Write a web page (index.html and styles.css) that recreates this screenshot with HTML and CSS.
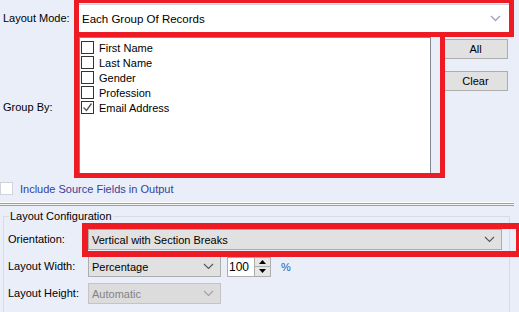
FILE: index.html
```html
<!DOCTYPE html>
<html lang="en">
<head>
  <meta charset="UTF-8">
  <title>Group Layout Options</title>
  <link rel="stylesheet" href="styles.css">
</head>
<body>
  <div class="page">

    <!-- Layout mode -->
    <div class="mode-row">
      <span class="label mode-label">Layout Mode:</span>
      <div class="combo combo-white">
        <span>Each Group Of Records</span>
        <svg class="chev" width="11" height="7" viewBox="0 0 11 7"><path d="M1 1l4.5 4.5L10 1" fill="none" stroke="#9aa3c2" stroke-width="1.3"/></svg>
      </div>
    </div>

    <!-- Group by list -->
    <div class="group-row">
      <span class="label group-label">Group By:</span>
      <div class="list">
        <div class="item"><span class="box"></span>First Name</div>
        <div class="item"><span class="box"></span>Last Name</div>
        <div class="item"><span class="box"></span>Gender</div>
        <div class="item"><span class="box"></span>Profession</div>
        <div class="item">
          <span class="box"><svg width="11" height="11" viewBox="0 0 11 11"><path d="M1.5 5.5l3 3 5-7" fill="none" stroke="#555" stroke-width="1.3"/></svg></span>Email Address
        </div>
      </div>
      <div class="buttons">
        <button class="btn">All</button>
        <button class="btn">Clear</button>
      </div>
    </div>

    <div class="include-row">
      <span class="box box-plain"></span>
      <span class="include-text">Include Source Fields in Output</span>
    </div>

    <div class="separator"></div>

    <!-- Layout configuration group -->
    <div class="groupbox">
      <div class="group-title">Layout Configuration</div>
      <div class="cfg-row">
        <span class="label cfg-label">Orientation:</span>
        <div class="combo combo-gray wide">
          <span>Vertical with Section Breaks</span>
          <svg class="chev" width="11" height="7" viewBox="0 0 11 7"><path d="M1 1l4.5 4.5L10 1" fill="none" stroke="#555" stroke-width="1.1"/></svg>
        </div>
      </div>
      <div class="cfg-row">
        <span class="label cfg-label">Layout Width:</span>
        <div class="combo combo-gray narrow">
          <span>Percentage</span>
          <svg class="chev" width="11" height="7" viewBox="0 0 11 7"><path d="M1 1l4.5 4.5L10 1" fill="none" stroke="#555" stroke-width="1.1"/></svg>
        </div>
        <div class="numeric">
          <span class="num-value">100</span>
          <div class="spin">
            <span class="spin-btn"><svg width="7" height="4" viewBox="0 0 7 4"><path d="M0 4L3.5 0L7 4z" fill="#000"/></svg></span>
            <span class="spin-btn"><svg width="7" height="4" viewBox="0 0 7 4"><path d="M0 0L3.5 4L7 0z" fill="#000"/></svg></span>
          </div>
        </div>
        <span class="percent">%</span>
      </div>
      <div class="cfg-row">
        <span class="label cfg-label">Layout Height:</span>
        <div class="combo combo-gray narrow disabled">
          <span>Automatic</span>
          <svg class="chev" width="11" height="7" viewBox="0 0 11 7"><path d="M1 1l4.5 4.5L10 1" fill="none" stroke="#a0a0a0" stroke-width="1.1"/></svg>
        </div>
      </div>
    </div>

    <!-- Highlight marks drawn over the form -->
    <div class="mark mark-mode"></div>
    <div class="mark mark-list"></div>
    <div class="mark mark-orient"></div>
  </div>
</body>
</html>
```

FILE: styles.css
```css
body {
  margin: 0;
  background: #eaeef8;
  font-family: "Liberation Sans", Arial, sans-serif;
  font-size: 11px;
  color: #000;
}
.page {
  position: relative;
  width: 519px;
  height: 312px;
  overflow: hidden;
}
.label {
  line-height: 13px;
}

/* combos */
.combo {
  display: flex;
  align-items: center;
  justify-content: space-between;
  box-sizing: border-box;
  padding: 0 6px 0 3px;
}
.combo-white {
  width: 432px;
  height: 30px;
  background: #fff;
  border: 1px solid #c9cfe2;
  padding-right: 8px;
  font-size: 11.5px;
}
.combo-gray {
  height: 21px;
  background: #e1e1e1;
  border: 1px solid #adadad;
}
.combo-gray.wide {
  width: 414px;
}
.combo-gray.narrow {
  width: 133px;
}
.combo.disabled {
  background: #dcdcdc;
  border-color: #c4c4c4;
  color: #838383;
}

/* top rows */
.mode-row {
  display: flex;
  align-items: center;
  height: 37px;
  padding-left: 3px;
  box-sizing: border-box;
}
.mode-label {
  width: 75px;
}
.group-row {
  display: flex;
  height: 138px;
  padding-left: 3px;
}
.group-label {
  width: 76px;
  padding-top: 64px;
}
.list {
  width: 352px;
  box-sizing: border-box;
  background: #fff;
  border: 1px solid #828790;
  padding-top: 2px;
}
.item {
  display: flex;
  align-items: center;
  height: 15px;
  padding-left: 1px;
}
.box {
  display: inline-flex;
  align-items: center;
  justify-content: center;
  width: 13px;
  height: 13px;
  box-sizing: border-box;
  border: 1px solid #333;
  background: #fff;
  margin-right: 5px;
}
.buttons {
  display: flex;
  flex-direction: column;
  gap: 12px;
  margin-left: 12px;
  padding-top: 2px;
}
.btn {
  width: 65px;
  height: 20px;
  background: #e1e1e1;
  border: 1px solid #adadad;
  font-family: inherit;
  font-size: 11px;
  padding: 0;
}
.include-row {
  display: flex;
  align-items: center;
  height: 13px;
  margin-top: 7px;
}
.box-plain {
  border-color: #cfd3dc;
  margin-right: 7px;
}
.include-text {
  color: #33419a;
}
.separator {
  width: 514px;
  height: 2px;
  margin-top: 7px;
  border-top: 1px solid #fff;
  border-bottom: 1px solid #a0a0a0;
  background: linear-gradient(#a0a0a0 50%, #f2f2f2 50%);
}

/* group box */
.groupbox {
  margin: 10px 0 0 3px;
  width: 507px;
  height: 120px;
  box-sizing: border-box;
  border: 1px solid #d7dbe3;
}
.group-title {
  width: fit-content;
  margin: -7px 0 0 5px;
  padding: 0 1px;
  line-height: 13px;
  background: #eaeef8;
}
.cfg-row {
  display: flex;
  align-items: center;
  margin-top: 6px;
  height: 21px;
}
.cfg-label {
  width: 80px;
  padding-left: 4px;
}
.numeric {
  display: flex;
  align-items: center;
  width: 44px;
  height: 20px;
  margin-left: 6px;
  box-sizing: border-box;
  background: #fff;
  border: 1px solid #adadad;
  padding-left: 1px;
  font-size: 12px;
}
.num-value {
  flex: 1;
}
.spin {
  display: flex;
  flex-direction: column;
  width: 15px;
  height: 18px;
  border-left: 1px solid #adadad;
}
.spin-btn {
  flex: 1;
  display: flex;
  align-items: center;
  justify-content: center;
  background: #e6e6e6;
}
.spin-btn + .spin-btn {
  border-top: 1px solid #adadad;
}
.percent {
  margin-left: 10px;
  color: #2b5aa6;
}

/* red highlight marks */
.mark {
  position: absolute;
  box-sizing: border-box;
  border: 5px solid #ed1c24;
}
.mark-mode {
  left: 74px;
  top: -2px;
  width: 440px;
  height: 39px;
}
.mark-list {
  left: 74px;
  top: 32px;
  width: 371px;
  height: 146px;
}
.mark-orient {
  left: 82px;
  top: 223px;
  width: 440px;
  height: 34px;
  border-width: 6px;
}
```
